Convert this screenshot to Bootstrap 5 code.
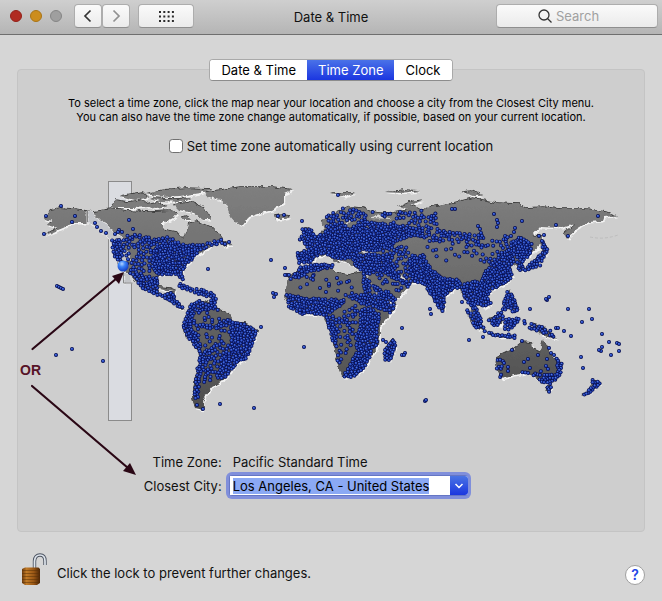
<!DOCTYPE html>
<html lang="en">
<head>
<meta charset="utf-8">
<meta name="viewport" content="width=device-width, initial-scale=1">
<title>Date &amp; Time</title>
<link href="https://cdn.jsdelivr.net/npm/bootstrap@5.3.0/dist/css/bootstrap.min.css" rel="stylesheet">
<style>
  body { background: #d6d6d6; color: #111; font: 13px/18px Inter, "Liberation Sans", sans-serif; }
  .titlebar { background: linear-gradient(#cfcfcf, #b5b5b5); border-bottom: 1px solid #6f6f6f; padding: 4px 4px 6px; }
  .lights { margin: 0 12px 0 6px; gap: 8px; }
  .light { width: 12px; height: 12px; padding: 0; border: 1px solid; border-radius: 50%; }
  .light-close { background: #b02c22; border-color: #942119; }
  .light-min { background: #cc8d1d; border-color: #a97416; }
  .light-zoom { background: #9f9f9f; border-color: #858585; }
  .tool { height: 24px; padding: 0; border: 1px solid #adadad; border-bottom-color: #8f8f8f; border-radius: 4px; background: linear-gradient(#fafafa, #ebebeb); display: flex; align-items: center; justify-content: center; }
  .tool-nav { width: 28px; }
  .tool-all { width: 56px; }
  .window-title { font-size: 13px; padding-top: 1px; }
  .search-box { width: 162px; cursor: text; }
  .search-box input { width: 60px; border: 0; padding: 0; background: none; outline: 0; line-height: 18px; }
  .search-box input::placeholder { color: #a0a0a0; }
  .panel { margin: 34px 17px 0; background: #cecece; border: 1px solid #c4c4c4; border-radius: 4px; padding-bottom: 35px; }
  .tabs { margin-top: -11px; border: 1px solid #a9a9a9; border-bottom-color: #8c8c8c; border-radius: 4px; background: #fff; overflow: hidden; }
  .tabs button { border: 0; background: #fff; color: #000; height: 20px; padding: 0 11px; line-height: 20px; }
  .tabs button.active { background: linear-gradient(#4a72e8, #1b36e0); color: #fff; }
  .intro { font-size: 11px; line-height: 14px; margin: 15px 0 13px; color: #000; }
  .auto-check { width: 14px; height: 14px; margin: 0; border: 1px solid #707070; border-radius: 3px; background-color: #fff; }
  .map-wrap { max-width: 626px; margin: 20px auto 28px; }
  .map-wrap svg { width: 100%; height: auto; }
  .notes { inset: 0; overflow: visible; pointer-events: none; z-index: 2; }
  .or-text { font: bold 14px "Liberation Sans", Arial, sans-serif; fill: #571327; }
  .field-name { padding-right: 5px; }
  .field-value { padding-left: 6px; }
  .combo { width: 239px; max-width: 100%; margin-left: 2px; border: 1px solid #6576c4; border-right: 0; border-radius: 3px; box-shadow: 0 0 0 3px #808fdb; background: #fff; }
  .combo input { min-width: 0; border: 0; outline: 0; padding: 0 3px; height: 19px; line-height: 18px; color: #000; background: #fff; caret-color: transparent; }
  .combo input::selection { background: #8ba9f4; color: #000; }
  .combo button { width: 18px; height: 19px; border: 0; padding: 0; display: flex; align-items: center; justify-content: center; background: linear-gradient(#4a74e4, #1b37df); border-radius: 0 3px 3px 0; }
  .footer-row { padding: 20px 17px 12px 21px; }
  .lock { border: 0; background: none; padding: 0; }
  .help { width: 20px; height: 20px; border: 1px solid #a0a0a0; border-radius: 50%; background: #fff; color: #2346e6; padding: 0; font-weight: 600; font-size: 14px; line-height: 18px; margin-top: 11px; }
</style>
<script src="https://cdn.jsdelivr.net/npm/bootstrap@5.3.0/dist/js/bootstrap.bundle.min.js"></script>
</head>
<body>
<header class="titlebar d-flex">
  <div class="col d-flex align-items-center">
    <div class="lights d-flex">
      <button class="light light-close" aria-label="Close"></button>
      <button class="light light-min" aria-label="Minimize"></button>
      <button class="light light-zoom" aria-label="Zoom"></button>
    </div>
    <button class="tool tool-nav" aria-label="Back"><svg width="10" height="14" fill="none" stroke="#333" stroke-width="1.7"><path d="M7.500 1.500 2 7l5.500 5.500"/></svg></button>
    <button class="tool tool-nav me-2" aria-label="Forward"><svg width="10" height="14" fill="none" stroke="#919191" stroke-width="1.7"><path d="M2.500 1.500 8 7l-5.500 5.500"/></svg></button>
    <button class="tool tool-all" aria-label="Show all"><svg width="15" height="11" fill="none" stroke="#2b2b2b" stroke-width="2" stroke-dasharray="2 2.300"><path d="M0 1h15M0 5.500h15M0 10h15"/></svg></button>
  </div>
  <div class="window-title col-auto align-self-center">Date &amp; Time</div>
  <div class="col d-flex justify-content-end">
    <label class="tool search-box"><svg class="me-1" width="14" height="14" fill="none" stroke="#333" stroke-width="1.300"><circle cx="6" cy="6" r="5"/><path d="m9.500 9.500 4 4"/></svg><input type="text" placeholder="Search" aria-label="Search"></label>
  </div>
</header>

<main>
  <section class="panel">
    <div class="d-flex justify-content-center">
      <div class="tabs d-flex" role="tablist">
        <button role="tab">Date &amp; Time</button>
        <button role="tab" class="active" aria-selected="true">Time Zone</button>
        <button role="tab">Clock</button>
      </div>
    </div>
    <p class="intro text-center">To select a time zone, click the map near your location and choose a city from the Closest City menu.<br>You can also have the time zone change automatically, if possible, based on your current location.</p>
    <div class="d-flex justify-content-center align-items-center gap-1">
      <input class="form-check-input auto-check" type="checkbox" id="auto"><label for="auto">Set time zone automatically using current location</label>
    </div>

    <div class="map-wrap position-relative">
      <svg class="d-block" viewBox="18 175 626 250" role="img" aria-label="World map of cities">
        <defs>
          <linearGradient id="ground" gradientUnits="userSpaceOnUse" x1="0" y1="185" x2="0" y2="410"><stop stop-color="#7f7f7f"/><stop offset=".5" stop-color="#686868"/><stop offset="1" stop-color="#4d4d4d"/></linearGradient>
          <radialGradient id="ball" cx=".4" cy=".3" r=".7"><stop stop-color="#b4d4ff"/><stop offset=".4" stop-color="#3c83f6"/><stop offset="1" stop-color="#133bc2"/></radialGradient>
          <filter id="coast" filterUnits="userSpaceOnUse" x="18" y="175" width="626" height="250"><feTurbulence type="fractalNoise" baseFrequency=".16" numOctaves="3" seed="4"/><feDisplacementMap in="SourceGraphic" scale="5" xChannelSelector="R" yChannelSelector="G"/></filter>
          <g id="dot"><circle r="2" fill="#070e4c"/><circle r="1.300" fill="#2242ba"/><circle cx="-.2" cy="-.3" r=".6" fill="#5a82e6"/></g>
          <g id="land">
            <path d="M44 219 50 210 60 208 75 209 87 211 93 212 110 209 130 211 150 212 170 211 178 213 174 218 162 224 162 229 177 232 183 239 187 232 188 224 196 221 203 224 212 228 220 235 223 239 213 242 203 243 212 243 209 248 197 255 188 263 182 272 184 282 180 279 177 274 167 274 158 276 156 284 158 292 163 296 170 292 175 291 173 298 178 304 184 309 178 307 167 299 155 294 145 290 138 284 127 272 118 265 113 253 112 240 105 235 97 228 87 223 73 223 63 228 43 236 57 228 47 225 53 221Z"/>
            <path d="M110 208 116 200 128 202 142 200 150 207 133 208ZM143 204 158 202 168 207 155 209ZM120 196 142 192 148 198 135 200ZM145 194 163 190 185 188 213 189 200 193 180 196 162 197ZM150 198 175 199 192 198 183 202 160 201ZM174 205 190 202 204 208 211 219 202 219 194 213 179 210ZM181 217 187 216 190 220 183 220Z"/>
            <path d="M205 192 220 190 240 187 273 187 293 190 284 194 284 203 273 210 260 213 249 217 243 225 235 222 230 216 228 207 220 200 209 197Z"/>
            <path d="M274 216 282 215 291 216 286 219 276 219ZM330 193 355 193 344 197ZM385 192 405 190 420 191 400 193ZM461 192 472 191 483 196 474 196ZM222 241 232 245 222 247Z"/>
            <path d="M322 221 330 217 337 212 350 207 363 208 369 211 380 213 393 213 408 210 398 207 409 202 423 200 411 205 423 211 430 207 453 203 473 198 488 201 496 203 520 204 525 208 543 207 560 209 587 209 606 212 617 216 603 217 602 221 588 222 577 229 567 238 564 233 575 224 562 228 540 227 533 235 542 237 542 244 530 255 522 262 523 271 517 267 510 263 508 267 512 275 507 283 492 290 487 295 491 303 483 308 473 302 476 312 483 321 474 314 469 304 463 297 461 289 455 289 445 297 443 312 436 303 427 288 420 283 408 283 400 278 410 286 400 297 384 303 376 292 370 282 367 270 353 267 345 262 337 259 341 265 326 255 318 256 310 262 299 263 297 252 309 250 303 242 320 235 325 230Z"/>
            <path d="M298 240 304 235 304 228 310 228 315 238 307 242ZM300 268 318 265 331 266 335 272 348 275 363 272 371 282 383 303 396 303 392 313 380 327 379 347 370 357 365 368 355 377 342 377 337 363 333 345 334 332 325 320 323 315 300 314 291 307 285 298 288 278ZM384 350 393 339 396 345 390 361 384 360Z"/>
            <path d="M190 305 200 300 217 307 230 315 233 323 245 324 258 331 252 345 247 358 236 364 222 382 212 387 206 395 203 402 204 410 195 408 192 398 195 378 200 362 198 350 187 338 182 328 188 315Z"/>
            <path d="M495 358 512 350 522 342 532 343 533 349 540 352 543 340 550 353 560 363 560 373 550 383 538 380 527 373 514 375 502 379 498 373ZM546 387 552 387 549 392ZM488 320 501 313 504 318 499 326 491 326ZM532 324 545 328 556 339 541 335ZM592 380 601 383 588 394 581 396 593 388ZM465 310 479 321 485 332 475 327ZM486 334 512 337 500 338ZM510 291 516 302 519 311 510 307ZM543 240 548 251 539 264 524 270 534 263 541 252ZM151 286 167 290 177 291 170 288Z"/>
          </g>
        </defs>
        <rect x="108.500" y="181.500" width="23" height="239" fill="#dadce1" stroke="#8b8b8b"/>
        <g filter="url(#coast)">
          <use href="#land" x="1.200" y="1.400" fill="#f3f3f3"/>
          <use href="#land" y="-.7" fill="#303030"/>
          <use href="#land" fill="url(#ground)"/>
          <path d="M87 211 93 212 96 217 108 224 112 231 123 238 121 247 130 253 129 260 119 265 113 253 112 240 105 235 97 228 87 223ZM123 270 132 276 132 283 124 283Z" fill="#c2c4c8" stroke="#eee" stroke-width=".8"/>
          <path d="M369 218 380 215 392 219M341 231 347 228 347 222 352 219 347 226 351 229ZM361 250 367 248 376 253 366 254Z" fill="#d6d6d6"/>
          <path d="M371 283 383 302M400 276 408 282" stroke="#dedede" stroke-width="2"/>
        </g>
        <path d="M87.500 211V222M123.500 273v10h9" fill="none" stroke="#858585"/>
        <path d="M590 237q14 3 28-2" fill="none" stroke="#b4b4b4" stroke-width=".7" stroke-dasharray="3 2"/>
        <g id="cities"></g>
        <circle cx="123" cy="266" r="5.500" fill="url(#ball)"/>
      </svg>
      <svg class="notes position-absolute" viewBox="18 175 626 250" aria-hidden="true">
        <g fill="#2a0715" stroke="#2a0715" stroke-width="2.200" stroke-linecap="round">
          <path d="M32.500 349 117 278"/><path d="m124 272-5 12-7-8Z" stroke="none"/>
          <path d="M32 386 128 468"/><path d="m136 475-13-4 7-8Z" stroke="none"/>
        </g>
        <text class="or-text" x="20" y="375">OR</text>
      </svg>
    </div>

    <div class="row g-0 align-items-center mb-1">
      <div class="col-4 text-end field-name">Time Zone:</div>
      <div class="col-8 field-value">Pacific Standard Time</div>
    </div>
    <div class="row g-0 align-items-center">
      <label class="col-4 text-end field-name" for="city">Closest City:</label>
      <div class="col-8"><div class="combo d-flex"><input id="city" class="flex-fill" type="text" value="Los Angeles, CA - United States"><button aria-label="Show cities"><svg width="10" height="6" fill="none" stroke="#fff" stroke-width="1.500"><path d="m1.500 1 3.500 3.500L8.500 1"/></svg></button></div></div>
    </div>
  </section>
</main>

<footer class="footer-row d-flex align-items-center">
  <button class="lock" aria-label="Lock">
    <svg class="d-block" width="28" height="34" viewBox="0 0 28 34">
      <defs><linearGradient id="brass"><stop stop-color="#6e3b0d"/><stop offset=".25" stop-color="#c07a27"/><stop offset=".65" stop-color="#9a5715"/><stop offset="1" stop-color="#4c2506"/></linearGradient></defs>
      <path d="M13.500 17V9Q14 3 19 3t5 6v4" fill="none" stroke="#4b5360" stroke-width="3.400"/>
      <path d="M13.500 17V9Q14 3 19 3t5 6v4" fill="none" stroke="#dfe5ed" stroke-width="1.700"/>
      <path d="M1 17 4 15.500H17.500L19 17V31L16 33H4L1 31Z" fill="url(#brass)"/>
      <path d="M1 18.500H19M1 21.500H19M1 24.500H19M1 27.500H19M1 30.500H19" stroke="#573006" stroke-width=".5"/>
    </svg>
  </button>
  <span class="ms-2 mt-2">Click the lock to prevent further changes.</span>
  <button class="help ms-auto" aria-label="Help">?</button>
</footer>

<script>
  // Each region: number of cities, then the outline that holds them (x, y pairs).
  const regions = [
    [330, [154,247,165,245,180,244,203,245,196,256,187,264,181,272,184,281,177,274,158,275,152,266]],
    [60, [150,240,168,237,190,247,222,239,218,244,200,250,188,262,170,262]],
    [62, [120,240,150,235,155,244,156,275,136,275,124,265]],
    [60, [112,240,120,240,122,250,122,264,113,255]],
    [14, [122,237,135,233,152,236,152,245,125,243]],
    [110, [128,271,140,274,158,278,157,291,163,296,172,292,178,303,166,299,144,290]],
    [26, [166,297,172,298,184,307,184,310,172,303]],
    [30, [180,283,194,288,208,291,215,295,214,299,204,296,179,287]],
    [18, [212,293,216,298,215,310,210,308]],
    [100, [190,305,200,300,216,307,210,310,196,312,190,325,202,347,200,352,183,331,184,320]],
    [34, [195,312,217,309,232,320,228,350,205,348,192,328]],
    [30, [192,324,215,325,231,318,231,325,210,330]],
    [250, [230,322,245,324,258,331,252,345,247,358,236,364,224,379,216,378,221,362,232,350]],
    [52, [203,350,229,340,233,356,218,370,212,383,203,382]],
    [34, [200,350,205,355,200,382,198,398,194,399,196,378]],
    [85, [298,240,303,235,302,229,310,228,316,238,308,242]],
    [170, [297,252,312,250,318,255,310,262,299,263]],
    [1000, [303,242,320,235,328,230,342,232,357,227,380,229,384,240,380,250,373,251,361,249,356,256,340,260,326,254,312,253]],
    [75, [325,226,342,222,350,230,366,215,366,229,340,233,328,230]],
    [34, [325,217,343,207,365,211,370,216,348,222,340,220,330,225]],
    [200, [367,222,392,224,423,228,423,236,405,238,388,247,377,243]],
    [30, [370,212,425,210,428,225,395,224]],
    [320, [352,256,376,253,389,257,395,268,400,278,410,283,408,287,390,276,380,270,367,275,355,266]],
    [60, [377,244,397,240,420,258,420,281,402,278,389,258]],
    [70, [300,267,316,264,333,265,333,268,305,272]],
    [14, [298,269,310,271,300,278,290,279]],
    [34, [363,272,370,282,370,298,375,300,368,300,362,283]],
    [30, [370,283,384,303,397,301,390,292,383,291]],
    [14, [376,272,395,276,406,285,400,293,383,290]],
    [12, [300,273,338,275,356,281,359,292,295,290]],
    [240, [286,294,305,298,345,300,343,304,330,314,323,317,321,314,300,314,289,307]],
    [90, [345,295,375,294,383,303,396,304,391,313,375,307,364,305]],
    [120, [360,311,368,307,380,314,377,333,370,337,360,330]],
    [55, [355,332,378,332,377,346,367,351,357,350]],
    [34, [326,317,333,316,337,340,334,345,328,325]],
    [50, [335,310,358,305,362,327,353,342,338,368,336,345]],
    [110, [353,358,358,350,371,351,370,359,365,367,353,377,343,377]],
    [75, [384,349,393,340,396,345,390,361,384,360]],
    [700, [422,266,429,266,442,278,460,280,462,288,455,288,445,296,443,312,438,308,434,299,425,286]],
    [120, [409,262,423,254,429,266,427,284,410,281]],
    [200, [463,284,475,280,486,286,490,291,487,296,491,303,484,307,474,302,481,319,471,307,463,294]],
    [290, [487,268,502,254,512,248,514,263,509,267,513,275,507,283,492,289,480,285]],
    [90, [510,243,520,237,532,244,530,255,523,262,512,253]],
    [36, [517,262,523,263,524,271,519,270]],
    [90, [543,240,548,251,540,266,523,271,532,262,542,252]],
    [60, [415,223,441,230,456,232,483,232,485,248,464,240,441,242,425,239]],
    [22, [430,240,486,240,488,253,449,263,421,249]],
    [26, [480,240,510,235,509,255,488,264,473,258]],
    [10, [430,213,438,213,437,224,427,222]],
    [85, [465,309,475,313,482,321,486,332,497,334,517,335,515,338,493,336,475,327]],
    [60, [508,290,514,298,518,310,514,313,507,307,502,314,490,322,501,310]],
    [18, [488,320,502,313,505,320,495,327]],
    [20, [505,318,520,318,518,322,510,330,504,330]],
    [20, [520,319,534,324,550,329,557,338,543,334,528,328]],
    [50, [556,357,562,364,560,376,550,384,538,381,544,375,557,374]],
    [9, [520,372,540,370,555,358,540,380]],
    [9, [495,358,503,360,502,379,497,374]],
    [22, [592,378,601,382,593,391,583,396,592,386]],
    [9, [546,386,552,387,549,392]]
  ];
  // Isolated cities and islands.
  const single = [61,206,75,216,72,222,46,216,44,234,95,223,97,227,101,231,106,233,119,230,122,232,129,220,133,229,115,234,118,232,57,286,59,287,61,288,63,289,208,269,229,242,222,243,225,244,56,355,72,349,103,361,261,327,220,404,254,408,197,405,203,409,271,260,285,268,287,275,285,275,289,275,273,293,276,294,274,297,278,216,284,215,338,195,302,221,304,347,425,401,402,328,383,340,386,342,402,355,405,353,404,355,426,400,452,209,455,209,494,214,497,220,498,223,497,227,522,221,556,225,568,236,598,216,544,235,539,236,542,241,515,228,514,232,478,226,480,229,511,236,547,300,549,297,546,299,530,309,568,309,589,309,582,322,592,319,602,334,609,342,617,343,619,344,601,351,599,350,602,347,611,355,619,351,581,357,583,368,556,328,558,328,571,336,564,331,549,348,551,353,538,355,528,359,524,362,530,368,547,359,548,369,504,363,508,367,508,371,554,355,469,340,483,337,462,302,430,309,431,314,349,281,337,278,329,284,313,276,352,293,326,292,347,282,320,288,522,341,512,350];
  const cities = document.getElementById('cities');
  let seed = 17;
  const rnd = () => (seed = (seed * 16807) % 2147483647) / 2147483647;
  const placed = [];
  const put = (x, y) => { placed.push([x, y]); };
  const inside = (x, y, p) => {
    let hit = false;
    for (let i = 0, j = p.length - 2; i < p.length; j = i, i += 2)
      if ((p[i + 1] > y) !== (p[j + 1] > y) && x < (p[j] - p[i]) * (y - p[i + 1]) / (p[j + 1] - p[i + 1]) + p[i]) hit = !hit;
    return hit;
  };
  for (const [count, p] of regions) {
    const xs = p.filter((v, i) => i % 2 === 0), ys = p.filter((v, i) => i % 2);
    const x0 = Math.min(...xs), x1 = Math.max(...xs), y0 = Math.min(...ys), y1 = Math.max(...ys);
    for (let made = 0, tries = 0; made < count && tries < count * 20; tries++) {
      const x = x0 + rnd() * (x1 - x0), y = y0 + rnd() * (y1 - y0);
      if (!inside(x, y, p) || placed.some(q => (q[0] - x) ** 2 + (q[1] - y) ** 2 < 4.4)) continue;
      put(x, y); made++;
    }
  }
  for (let i = 0; i < single.length; i += 2) put(single[i], single[i + 1]);
  cities.innerHTML = placed.map(([x, y]) => `<use href="#dot" x="${x.toFixed(1)}" y="${y.toFixed(1)}"/>`).join('');
  const city = document.getElementById('city');
  city.focus({ preventScroll: true });
  city.select();
</script>
</body>
</html>
